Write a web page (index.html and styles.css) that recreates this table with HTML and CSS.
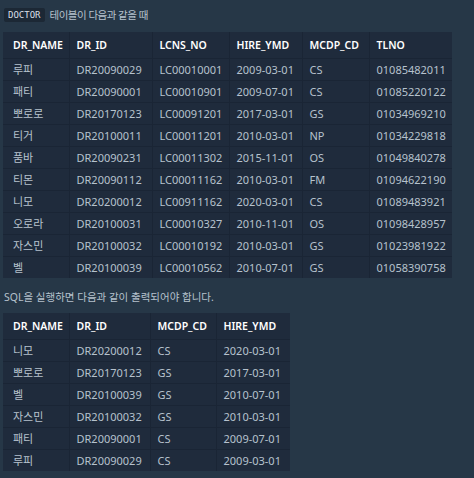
FILE: index.html
```html
<!DOCTYPE html>
<html lang="ko">
<head>
  <meta charset="UTF-8">
  <title>DOCTOR</title>
  <link rel="stylesheet" href="styles.css">
</head>
<body>

  <p class="desc"><code>DOCTOR</code> 테이블이 다음과 같을 때</p>

  <table class="sql-table first">
    <thead>
      <tr>
        <th class="c-name">DR_NAME</th>
        <th class="c-id">DR_ID</th>
        <th class="c-lcns">LCNS_NO</th>
        <th class="c-hire">HIRE_YMD</th>
        <th class="c-mcdp">MCDP_CD</th>
        <th class="c-tlno">TLNO</th>
      </tr>
    </thead>
    <tbody>
      <tr><td>루피</td><td>DR20090029</td><td>LC00010001</td><td>2009-03-01</td><td>CS</td><td>01085482011</td></tr>
      <tr><td>패티</td><td>DR20090001</td><td>LC00010901</td><td>2009-07-01</td><td>CS</td><td>01085220122</td></tr>
      <tr><td>뽀로로</td><td>DR20170123</td><td>LC00091201</td><td>2017-03-01</td><td>GS</td><td>01034969210</td></tr>
      <tr><td>티거</td><td>DR20100011</td><td>LC00011201</td><td>2010-03-01</td><td>NP</td><td>01034229818</td></tr>
      <tr><td>품바</td><td>DR20090231</td><td>LC00011302</td><td>2015-11-01</td><td>OS</td><td>01049840278</td></tr>
      <tr><td>티몬</td><td>DR20090112</td><td>LC00011162</td><td>2010-03-01</td><td>FM</td><td>01094622190</td></tr>
      <tr><td>니모</td><td>DR20200012</td><td>LC00911162</td><td>2020-03-01</td><td>CS</td><td>01089483921</td></tr>
      <tr><td>오로라</td><td>DR20100031</td><td>LC00010327</td><td>2010-11-01</td><td>OS</td><td>01098428957</td></tr>
      <tr><td>자스민</td><td>DR20100032</td><td>LC00010192</td><td>2010-03-01</td><td>GS</td><td>01023981922</td></tr>
      <tr><td>벨</td><td>DR20100039</td><td>LC00010562</td><td>2010-07-01</td><td>GS</td><td>01058390758</td></tr>
    </tbody>
  </table>

  <p class="desc second-desc">SQL을 실행하면 다음과 같이 출력되어야 합니다.</p>

  <table class="sql-table second">
    <thead>
      <tr>
        <th class="c-name">DR_NAME</th>
        <th class="c-id2">DR_ID</th>
        <th class="c-mcdp2">MCDP_CD</th>
        <th class="c-hire2">HIRE_YMD</th>
      </tr>
    </thead>
    <tbody>
      <tr><td>니모</td><td>DR20200012</td><td>CS</td><td>2020-03-01</td></tr>
      <tr><td>뽀로로</td><td>DR20170123</td><td>GS</td><td>2017-03-01</td></tr>
      <tr><td>벨</td><td>DR20100039</td><td>GS</td><td>2010-07-01</td></tr>
      <tr><td>자스민</td><td>DR20100032</td><td>GS</td><td>2010-03-01</td></tr>
      <tr><td>패티</td><td>DR20090001</td><td>CS</td><td>2009-07-01</td></tr>
      <tr><td>루피</td><td>DR20090029</td><td>CS</td><td>2009-03-01</td></tr>
    </tbody>
  </table>

</body>
</html>
```

FILE: styles.css
```css
body {
  margin: 0;
  padding: 8px 3px 0;
  background: #263747;
  color: #b6c2cd;
  font-family: "Noto Sans", "Noto Sans CJK KR", sans-serif;
  font-size: 11px;
}

.desc {
  margin: 0;
  height: 14px;
  line-height: 14px;
  display: flex;
  align-items: center;
  gap: 5px;
  padding-left: 1px;
  font-size: 10.5px;
  letter-spacing: -0.5px;
  color: #b6c2cd;
}

.desc code {
  font-family: "DejaVu Sans Mono", monospace;
  font-size: 9px;
  letter-spacing: 0;
  background: #1c2835;
  color: #d6dee6;
  padding: 0 4px;
  height: 14px;
  line-height: 14px;
  border-radius: 2px;
}

.second-desc {
  margin-top: 12px;
  letter-spacing: 0;
}

.sql-table {
  border-collapse: collapse;
  background: #1f2b3c;
  table-layout: fixed;
}

.sql-table.first {
  width: 449px;
  margin-top: 10px;
}

.sql-table.second {
  width: 287px;
  margin-top: 9px;
}

.sql-table th,
.sql-table td {
  box-sizing: border-box;
  border: 1px solid #1a2535;
  padding: 0 0 0 7px;
  text-align: left;
  white-space: nowrap;
  overflow: hidden;
}

.sql-table tr > :first-child {
  border-left: none;
  padding-left: 10px;
}

.sql-table tr > :last-child { border-right: none; }
.sql-table thead th { border-top: none; }
.sql-table tbody tr:last-child td { border-bottom: none; }

.sql-table th {
  height: 26px;
  color: #ffffff;
  font-size: 10.5px;
  font-weight: 600;
}

.sql-table td {
  height: 22px;
}

.c-name { width: 66px; }
.c-id { width: 83px; }
.c-lcns { width: 77px; }
.c-hire { width: 73px; }
.c-mcdp { width: 67px; }
.c-tlno { width: 83px; }
.c-id2 { width: 81px; }
.c-mcdp2 { width: 66px; }
.c-hire2 { width: 74px; }
```
